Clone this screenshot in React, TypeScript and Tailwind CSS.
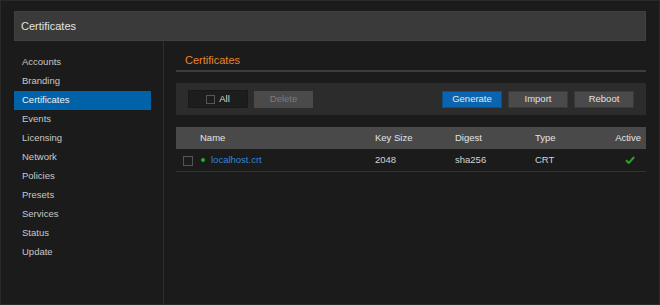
import React from 'react';

const navItems = ['Accounts', 'Branding', 'Certificates', 'Events', 'Licensing', 'Network', 'Policies', 'Presets', 'Services', 'Status', 'Update'];

const certs = [
  { name: 'localhost.crt', keySize: '2048', digest: 'sha256', type: 'CRT', active: true },
];

const CheckBox: React.FC<{ size?: string }> = ({ size = 'w-[9px] h-[9px]' }) => (
  <span className={`${size} border border-[#555] bg-[#1c1c1c] inline-block`}></span>
);

const App: React.FC = () => {
  return (
    <div
      className="w-[660px] h-[305px] bg-[#1b1b1b] border border-[#2a2a2a] pt-[10px] pl-[13px] pr-[13px] flex flex-col overflow-hidden"
      style={{ fontFamily: '"Liberation Sans", Arial, sans-serif' }}
    >
      {/* top bar */}
      <div className="h-[30px] shrink-0 bg-[#3a3a3a] border border-[#404040] flex items-center pl-[6px] text-[11px] text-[#e2e2e2]">
        Certificates
      </div>

      <div className="flex flex-1 min-h-0">
        {/* sidebar */}
        <aside className="w-[150px] shrink-0 border-r border-[#2e2e2e] pt-[12px] pr-[12px]">
          {navItems.map((item) => (
            <div
              key={item}
              className={`h-[19px] flex items-center pl-[8px] text-[9.5px] ${item === 'Certificates' ? 'bg-[#0062a8] text-[#f0f0f0]' : 'text-[#c8c8c8]'}`}
            >
              {item}
            </div>
          ))}
        </aside>

        {/* content */}
        <main className="flex-1 pl-[12px]">
          <div className="h-[31px] flex items-end border-b-2 border-[#3c3c3c]">
            <h2 className="pl-[9px] pb-[2px] text-[11px] text-[#e8862c]">Certificates</h2>
          </div>

          <div className="mt-[11px] h-[32px] bg-[#2c2c2c] flex items-center px-[12px]">
            <div className="w-[60px] h-[18px] bg-[#1d1d1d] border border-[#181818] flex items-center justify-center gap-[4px] text-[9.5px] text-[#d8d8d8]">
              <CheckBox />
              <span>All</span>
            </div>
            <button className="ml-[6px] w-[59px] h-[17px] bg-[#4a4a4a] text-[9.5px] text-[#7c7c7c]">Delete</button>
            <div className="flex-1"></div>
            <button className="w-[60px] h-[17px] bg-[#0b64ad] border border-[#08508c] text-[9.5px] text-[#e8e8e8]">Generate</button>
            <button className="ml-[6px] w-[60px] h-[17px] bg-[#4a4a4a] border border-[#3a3a3a] text-[9.5px] text-[#e0e0e0]">Import</button>
            <button className="ml-[6px] w-[60px] h-[17px] bg-[#4a4a4a] border border-[#3a3a3a] text-[9.5px] text-[#e0e0e0]">Reboot</button>
          </div>

          <div className="mt-[12px]">
            <div className="h-[22px] bg-[#494949] flex items-center text-[9.5px] text-[#e4e4e4]">
              <span className="w-[24px]"></span>
              <span className="w-[175px]">Name</span>
              <span className="w-[80px]">Key Size</span>
              <span className="w-[80px]">Digest</span>
              <span className="flex-1">Type</span>
              <span className="pr-[5px]">Active</span>
            </div>
            {certs.map((c) => (
              <div key={c.name} className="h-[23px] flex items-center border-b border-[#333] text-[9.5px] text-[#d4d4d4]">
                <span className="w-[24px] flex justify-center pt-[1px]">
                  <CheckBox size="w-[10px] h-[10px]" />
                </span>
                <span className="w-[175px] flex items-center">
                  <span className="w-[4px] h-[4px] rounded-full bg-[#1fb01f] ml-[1px] mr-[6px]"></span>
                  <span className="text-[#3186d8]">{c.name}</span>
                </span>
                <span className="w-[80px]">{c.keySize}</span>
                <span className="w-[80px]">{c.digest}</span>
                <span className="flex-1">{c.type}</span>
                <span className="pr-[11px]">
                  {c.active && (
                    <svg width="10" height="8" viewBox="0 0 10 8">
                      <path d="M1 4.2 L3.8 7 L9.2 1" stroke="#21a821" strokeWidth="2" fill="none" />
                    </svg>
                  )}
                </span>
              </div>
            ))}
          </div>
        </main>
      </div>
    </div>
  );
};

export default App;
